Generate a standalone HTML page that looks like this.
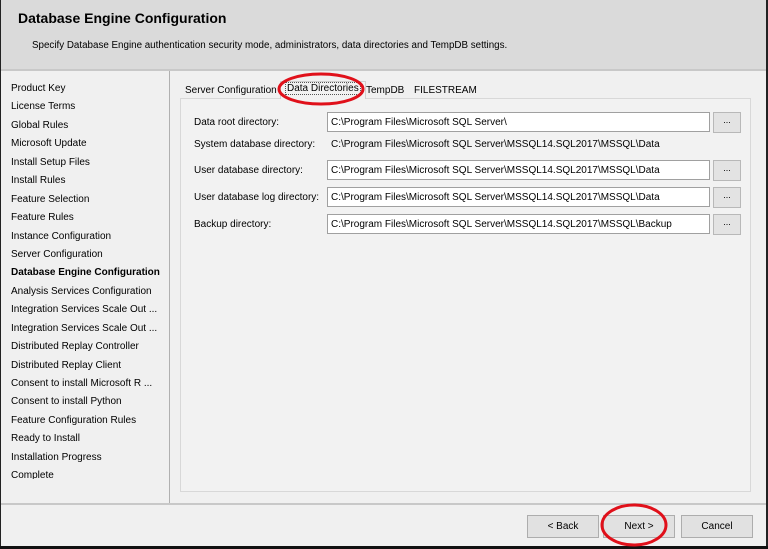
<!DOCTYPE html>
<html><head><style>
body{margin:0;width:768px;height:549px;overflow:hidden;background:#f0f0f0;font-family:"Liberation Sans",sans-serif;font-size:10px;color:#000;position:relative}
.a{position:absolute}
#hdr{left:0;top:0;width:768px;height:69px;background:#dadada;border-bottom:2px solid #c8c8c8}
.inp{height:20px;border:1px solid #a0a0a0;background:#fff;box-sizing:border-box;padding:3px 3px 0;font-size:10px;left:327px;width:383px;line-height:13px}
.br{left:713px;width:28px;height:21px;border:1px solid #b8b8b8;background:#e3e3e3;box-sizing:border-box;text-align:center;font-size:9px;line-height:14px}
.lbl{left:194px}
.btn{height:23px;border:1px solid #adadad;background:#e1e1e1;box-sizing:border-box;text-align:center;line-height:21px;font-size:10px;top:515px}
.tab{top:84px;height:14px;font-size:10px;line-height:14px;padding:0 4px}
</style></head><body>
<div class="a" id="hdr"></div>
<div class="a" style="left:18px;top:10px;font-size:14px;font-weight:bold">Database Engine Configuration</div>
<div class="a" style="left:32px;top:40px;font-size:9.8px">Specify Database Engine authentication security mode, administrators, data directories and TempDB settings.</div>
<div class="a" style="left:169px;top:71px;width:1px;height:433px;background:#b0b0b0"></div>
<div class="a" style="left:0;top:503px;width:768px;height:2px;background:#c8c8c8"></div>
<div class="a" style="left:0;top:0;width:1px;height:549px;background:#222"></div>
<div class="a" style="left:766px;top:0;width:2px;height:549px;background:#222"></div>
<div class="a" style="left:0;top:546px;width:768px;height:3px;background:#111"></div>
<div class="a" style="left:0;top:71px;width:169px;height:408px;overflow:hidden">
<div style="position:relative;top:9px;left:11px;line-height:18.43px">
Product Key<br>License Terms<br>Global Rules<br>Microsoft Update<br>Install Setup Files<br>Install Rules<br>Feature Selection<br>Feature Rules<br>Instance Configuration<br>Server Configuration<br><b>Database Engine Configuration</b><br>Analysis Services Configuration<br>Integration Services Scale Out ...<br>Integration Services Scale Out ...<br>Distributed Replay Controller<br>Distributed Replay Client<br>Consent to install Microsoft R ...<br>Consent to install Python<br>Feature Configuration Rules<br>Ready to Install<br>Installation Progress<br>Complete
</div></div>
<div class="a" style="left:180px;top:98px;width:571px;height:394px;border:1px solid #d8d8d8;background:#f2f2f2;box-sizing:border-box"></div>
<div class="a tab" style="left:181px">Server Configuration</div>
<div class="a tab" style="left:280px;top:81px;height:17px;background:#f2f2f2;border:1px solid #d0d0d0;border-bottom:none"><span style="border:1px dotted #555;padding:0 1px">Data Directories</span></div>
<div class="a tab" style="left:362px">TempDB</div>
<div class="a tab" style="left:410px">FILESTREAM</div>
<svg class="a" style="left:275px;top:71px" width="92" height="36"><ellipse cx="46" cy="18" rx="42" ry="15" fill="none" stroke="#e0101a" stroke-width="3"/></svg>
<div class="a lbl" style="top:117px">Data root directory:</div>
<div class="a lbl" style="top:139px">System database directory:</div>
<div class="a lbl" style="top:165px">User database directory:</div>
<div class="a lbl" style="top:192px">User database log directory:</div>
<div class="a lbl" style="top:219px">Backup directory:</div>
<div class="a inp" style="top:112px">C:\Program Files\Microsoft SQL Server\</div>
<div class="a" style="left:331px;top:139px;font-size:10px">C:\Program Files\Microsoft SQL Server\MSSQL14.SQL2017\MSSQL\Data</div>
<div class="a inp" style="top:160px">C:\Program Files\Microsoft SQL Server\MSSQL14.SQL2017\MSSQL\Data</div>
<div class="a inp" style="top:187px">C:\Program Files\Microsoft SQL Server\MSSQL14.SQL2017\MSSQL\Data</div>
<div class="a inp" style="top:214px">C:\Program Files\Microsoft SQL Server\MSSQL14.SQL2017\MSSQL\Backup</div>
<div class="a br" style="top:112px">...</div>
<div class="a br" style="top:160px">...</div>
<div class="a br" style="top:187px">...</div>
<div class="a br" style="top:214px">...</div>
<div class="a btn" style="left:527px;width:72px">&lt; Back</div>
<div class="a btn" style="left:603px;width:72px">Next &gt;</div>
<div class="a btn" style="left:681px;width:72px">Cancel</div>
<svg class="a" style="left:599px;top:502px" width="70" height="47"><ellipse cx="35" cy="23" rx="32" ry="20" fill="none" stroke="#e0101a" stroke-width="3"/></svg>
</body></html>
